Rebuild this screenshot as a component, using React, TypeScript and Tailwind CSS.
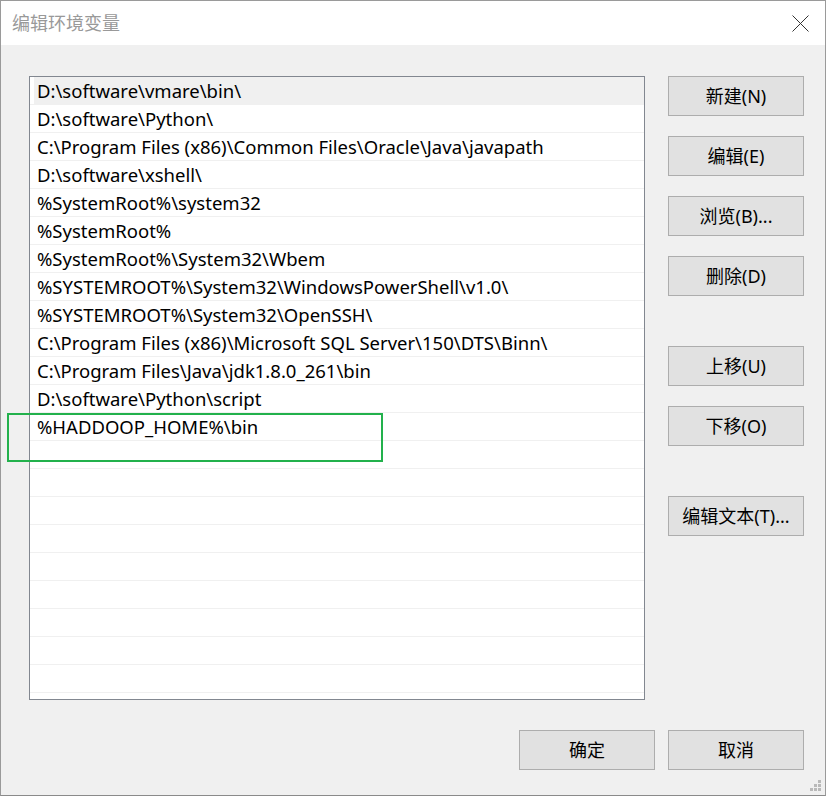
import React from "react";

const paths = [
  "D:\\software\\vmare\\bin\\",
  "D:\\software\\Python\\",
  "C:\\Program Files (x86)\\Common Files\\Oracle\\Java\\javapath",
  "D:\\software\\xshell\\",
  "%SystemRoot%\\system32",
  "%SystemRoot%",
  "%SystemRoot%\\System32\\Wbem",
  "%SYSTEMROOT%\\System32\\WindowsPowerShell\\v1.0\\",
  "%SYSTEMROOT%\\System32\\OpenSSH\\",
  "C:\\Program Files (x86)\\Microsoft SQL Server\\150\\DTS\\Binn\\",
  "C:\\Program Files\\Java\\jdk1.8.0_261\\bin",
  "D:\\software\\Python\\script",
  "%HADDOOP_HOME%\\bin",
];

const rows = Array.from({ length: 23 }, (_, i) => paths[i] ?? "");

function Btn({ label, className = "" }: { label: string; className?: string }) {
  return (
    <div
      className={
        "flex h-[40px] w-[136px] items-center justify-center border border-[#adadad] bg-[#e1e1e1] text-[18px] text-black " +
        className
      }
    >
      {label}
    </div>
  );
}

export default function App() {
  return (
    <div
      className="relative h-[796px] w-[827px] overflow-hidden bg-white"
      style={{ fontFamily: '"Noto Sans", "Noto Sans CJK SC", sans-serif' }}
    >
      <div className="flex h-[796px] w-[826px] flex-col border border-[#9a9a9a] border-b-[#8a8a8a]">
        {/* title bar */}
        <div className="flex h-[44px] shrink-0 items-center justify-between bg-white pl-[11px] pr-[16px]">
          <span className="text-[18px] leading-none text-[#999999]">编辑环境变量</span>
          <svg width="17" height="17" viewBox="0 0 17 17">
            <path d="M0.5 0.5L16.5 16.5M16.5 0.5L0.5 16.5" stroke="#333" strokeWidth="1" />
          </svg>
        </div>
        {/* body */}
        <div className="relative flex flex-1 flex-col bg-[#f0f0f0]">
          <div className="flex pl-[28px] pt-[31px]">
            {/* list */}
            <div className="h-[624px] w-[616px] overflow-hidden border border-[#828790] bg-white">
              {rows.map((p, i) => (
                <div key={i} className="flex h-[28px] border-b border-[#f0f0f0] pl-[1px]">
                  <div
                    className={
                      "flex h-full flex-1 items-center pr-[3px] pt-[1px] text-[18.5px] leading-none text-black " +
                      (i === 0 ? "ml-[3px] bg-[#f0f0f0] pl-[3px]" : "pl-[6px]")
                    }
                  >
                    <span className="whitespace-pre">{p}</span>
                  </div>
                </div>
              ))}
            </div>
            {/* right buttons */}
            <div className="ml-[23px] flex flex-col">
              <Btn label="新建(N)" />
              <Btn label="编辑(E)" className="mt-[20px]" />
              <Btn label="浏览(B)..." className="mt-[20px]" />
              <Btn label="删除(D)" className="mt-[20px]" />
              <Btn label="上移(U)" className="mt-[50px]" />
              <Btn label="下移(O)" className="mt-[20px]" />
              <Btn label="编辑文本(T)..." className="mt-[50px]" />
            </div>
          </div>
          {/* bottom buttons */}
          <div className="flex justify-end gap-[13px] pr-[21px] pt-[30px]">
            <Btn label="确定" />
            <Btn label="取消" />
          </div>
          {/* resize grip */}
          <svg className="absolute bottom-[3px] right-[3px]" width="12" height="12" viewBox="0 0 12 12">
            <rect x="8" y="0" width="3" height="3" fill="#b9b9b9" />
            <rect x="4" y="4" width="3" height="3" fill="#b9b9b9" />
            <rect x="8" y="4" width="3" height="3" fill="#b9b9b9" />
            <rect x="0" y="8" width="3" height="3" fill="#b9b9b9" />
            <rect x="4" y="8" width="3" height="3" fill="#b9b9b9" />
            <rect x="8" y="8" width="3" height="3" fill="#b9b9b9" />
          </svg>
        </div>
      </div>
      {/* green highlight */}
      <div className="absolute left-[7px] top-[413px] h-[49px] w-[376px] border-[2px] border-[#22b14c]" />
    </div>
  );
}
